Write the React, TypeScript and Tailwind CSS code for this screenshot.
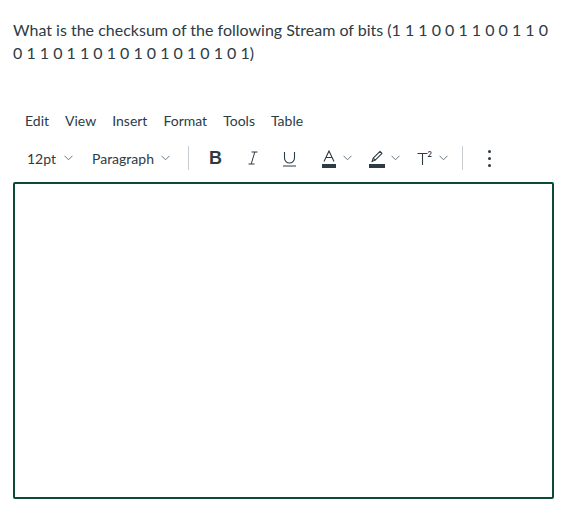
import React from "react";

const Chevron = ({ cls }: { cls: string }) => (
  <svg width="9" height="6" viewBox="0 0 9 6" className={cls}>
    <path d="M0.5 0.8l4 4 4-4" fill="none" stroke="#6b7780" strokeWidth="1" />
  </svg>
);

export default function App() {
  return (
    <div className="w-[564px] h-[510px] bg-white text-[#2d3b45]" style={{ fontFamily: "Lato, 'Noto Sans', sans-serif" }}>
      <div className="pl-[13px] pr-[10px] pt-[18px] text-[16px] leading-[23px]">
        What is the checksum of the following Stream of bits (1 1 1 0 0 1 1 0 0 1 1 0 0 1 1 0 1 1 0 1 0 1 0 1 0 1 0 1 0 1)
      </div>
      <div className="mt-[44px] flex items-center h-[24px] pl-[17px] text-[14px]">
        {["Edit", "View", "Insert", "Format", "Tools", "Table"].map((m) => (
          <span key={m} className="px-[8px]">{m}</span>
        ))}
      </div>
      <div className="mt-[14px] flex items-center h-[24px] pl-[27px] text-[14px]">
        <span className="w-[29px]">12pt</span>
        <Chevron cls="ml-[8px]" />
        <span className="ml-[19px] w-[61px]">Paragraph</span>
        <Chevron cls="ml-[8px]" />
        <span className="ml-[18px] w-px h-[24px] bg-[#c7cdd1]" />
        <span className="ml-[20px] w-[13px] text-[18px] leading-[20px] font-bold" style={{ fontFamily: "'Liberation Sans', sans-serif" }}>B</span>
        <svg className="ml-[26px]" width="10" height="14" viewBox="0 0 10 14">
          <path d="M3.5 1h6M0.5 13h6M6.8 1L3.2 13" fill="none" stroke="#2d3b45" strokeWidth="1" />
        </svg>
        <svg className="ml-[25px] mt-[2px]" width="13" height="16" viewBox="0 0 13 16">
          <path d="M1.5 1v6a5 5 0 0 0 10 0V1" fill="none" stroke="#2d3b45" strokeWidth="1.1" />
          <path d="M0 15h13" stroke="#2d3b45" strokeWidth="1" />
        </svg>
        <svg className="ml-[26px] mt-[2px]" width="14" height="18" viewBox="0 0 14 18">
          <path d="M2 11.5L7 1l5 10.5M3.9 7.5h6.2" fill="none" stroke="#2d3b45" strokeWidth="1.1" />
          <rect x="0" y="14" width="14" height="4" fill="#2d3b45" />
        </svg>
        <Chevron cls="ml-[7px]" />
        <svg className="ml-[17px] mt-[2px]" width="16" height="18" viewBox="0 0 16 18">
          <path d="M3.2 11.2l1-3 6.8-6.8 2 2-6.8 6.8z M4.2 8.2l2 2" fill="none" stroke="#2d3b45" strokeWidth="1.1" strokeLinejoin="round" />
          <path d="M2.4 11.8l1.4-0.4" stroke="#2d3b45" strokeWidth="1" />
          <rect x="0" y="14" width="16" height="4" fill="#2d3b45" />
        </svg>
        <Chevron cls="ml-[6px]" />
        <svg className="ml-[17px]" width="16" height="16" viewBox="0 0 16 16">
          <path d="M0.5 3.5h10M5.5 3.5V15" fill="none" stroke="#2d3b45" strokeWidth="1.1" />
          <text x="10.5" y="6.5" fontSize="7.5" fill="#2d3b45" fontFamily="Lato, sans-serif" fontWeight="bold">2</text>
        </svg>
        <Chevron cls="ml-[6px]" />
        <span className="ml-[14px] w-px h-[24px] bg-[#c7cdd1]" />
        <span className="ml-[25px] flex flex-col gap-[4px]">
          <span className="w-[3px] h-[3px] rounded-full bg-[#2d3b45]" />
          <span className="w-[3px] h-[3px] rounded-full bg-[#2d3b45]" />
          <span className="w-[3px] h-[3px] rounded-full bg-[#2d3b45]" />
        </span>
      </div>
      <div className="mt-[12px] ml-[13px] w-[541px] h-[317px] border-2 border-[#0b4a33] rounded-[2px]" />
    </div>
  );
}
